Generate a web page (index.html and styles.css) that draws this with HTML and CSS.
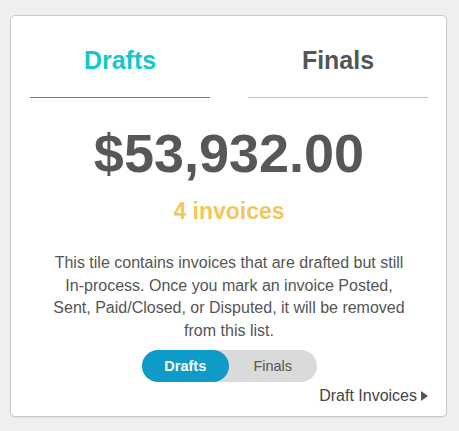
FILE: index.html
```html
<!DOCTYPE html>
<html lang="en">
<head>
<meta charset="utf-8">
<title>Invoices tile</title>
<link rel="stylesheet" href="styles.css">
</head>
<body>
<div class="card">
  <div class="tabs">
    <div class="tab tab-active">Drafts</div>
    <div class="tab">Finals</div>
  </div>
  <div class="amount">$53,932.00</div>
  <div class="count">4 invoices</div>
  <p class="desc">This tile contains invoices that are drafted but still In-process. Once you mark an invoice Posted, Sent, Paid/Closed, or Disputed, it will be removed from this list.</p>
  <div class="toggle-row">
    <div class="toggle">
      <span class="seg seg-active">Drafts</span>
      <span class="seg">Finals</span>
    </div>
  </div>
  <div class="link-row">
    <a class="link">Draft Invoices<span class="caret"></span></a>
  </div>
</div>
</body>
</html>
```
FILE: styles.css
```css
html, body {
  margin: 0;
  padding: 0;
  background: #efeff1;
}
body {
  padding: 15px 12px 14px 10px;
  font-family: "Liberation Sans", Arial, sans-serif;
  color: #555555;
}
.card {
  box-sizing: border-box;
  width: 437px;
  background: #ffffff;
  border: 1px solid #c9c9cb;
  border-radius: 5px;
  padding: 0 18px 11px 19px;
  box-shadow: 0 1px 1px rgba(0,0,0,0.06);
}
.tabs {
  display: grid;
  grid-template-columns: 180px 180px;
  column-gap: 38px;
}
.tab {
  text-align: center;
  font-weight: bold;
  font-size: 25px;
  line-height: 28px;
  padding: 30px 0 23px;
  border-bottom: 1px solid #c4c4c4;
  color: #555555;
}
.tab-active {
  color: #14c7cb;
  border-bottom-color: #1a9bc8;
}
.amount {
  margin-top: 25px;
  text-align: center;
  font-weight: bold;
  font-size: 54px;
  line-height: 60px;
  color: #575757;
}
.count {
  margin-top: 15px;
  text-align: center;
  font-weight: bold;
  font-size: 23px;
  line-height: 26px;
  color: #f1c75b;
}
.desc {
  margin: 28px auto 0;
  max-width: 365px;
  text-align: center;
  font-size: 16px;
  line-height: 22.6px;
  color: #555555;
}
.toggle-row {
  margin-top: 8px;
  display: flex;
  justify-content: center;
}
.toggle {
  display: flex;
  width: 175px;
  height: 32px;
  border-radius: 16px;
  background: #dadada;
}
.seg {
  flex: 1;
  display: flex;
  align-items: center;
  justify-content: center;
  border-radius: 16px;
  font-size: 14.5px;
  color: #555555;
}
.seg-active {
  background: #0f9bc7;
  color: #ffffff;
  font-weight: bold;
}
.link-row {
  margin-top: 5px;
  display: flex;
  justify-content: flex-end;
}
.link {
  display: flex;
  align-items: center;
  font-size: 16px;
  line-height: 18px;
  color: #444444;
}
.caret {
  display: inline-block;
  margin-left: 4px;
  width: 0;
  height: 0;
  border-top: 5px solid transparent;
  border-bottom: 5px solid transparent;
  border-left: 7px solid #555555;
}
```
